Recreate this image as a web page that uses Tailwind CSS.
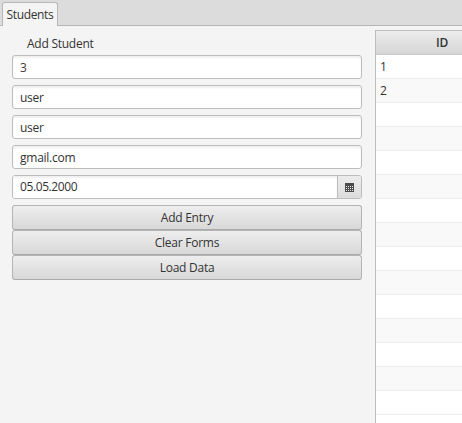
<!DOCTYPE html>
<html lang="en">
<head>
    <meta charset="UTF-8">
    <title>Students</title>
    <script src="https://cdn.jsdelivr.net/npm/@tailwindcss/browser@4"></script>
</head>
<body class="w-[462px] h-[423px] overflow-hidden bg-[#f4f4f4] text-[#333] text-[12px] tracking-[-0.25px] font-['Open_Sans','Noto_Sans',sans-serif]">
    <!-- tab bar -->
    <div class="h-[26px] bg-[#dcdcdc] border-b border-[#b5b5b5] pl-[2px] pt-[2px]">
        <div class="w-[56px] h-[24px] bg-[#f4f4f4] border border-b-0 border-[#b8b8b8] rounded-t-[3px] flex items-center justify-center text-[12px] tracking-[-0.35px]">Students</div>
    </div>

    <div class="flex h-[397px]">
        <!-- form -->
        <div class="w-[375px] shrink-0 pl-[12px] pr-[13px]">
            <div class="h-[29px] pl-[15px] pt-[9px] leading-[17px]">Add Student</div>
            <div class="flex flex-col gap-[6px]">
                <input value="3" class="w-full h-[24px] px-[7px] bg-white border border-[#bdbdbd] rounded-[3px] shadow-[inset_0_2px_2px_#f0f0f0] outline-none text-[#4a3a32]">
                <input value="user" class="w-full h-[24px] px-[7px] bg-white border border-[#bdbdbd] rounded-[3px] shadow-[inset_0_2px_2px_#f0f0f0] outline-none">
                <input value="user" class="w-full h-[24px] px-[7px] bg-white border border-[#bdbdbd] rounded-[3px] shadow-[inset_0_2px_2px_#f0f0f0] outline-none">
                <input value="gmail.com" class="w-full h-[24px] px-[7px] bg-white border border-[#bdbdbd] rounded-[3px] shadow-[inset_0_2px_2px_#f0f0f0] outline-none">
                <div class="flex h-[24px] border border-[#bdbdbd] rounded-[3px] overflow-hidden">
                    <input value="05.05.2000" class="flex-1 min-w-0 px-[7px] bg-white shadow-[inset_0_2px_2px_#f0f0f0] outline-none tracking-[-0.4px]">
                    <div class="w-[24px] border-l border-[#bdbdbd] bg-gradient-to-b from-[#ececec] to-[#dcdcdc] flex items-center justify-center">
                        <svg width="9" height="9" viewBox="0 0 9 9">
                            <rect width="9" height="9" fill="#4a4a4a"/>
                            <path d="M1 3h1v1H1zM3 3h1v1H3zM5 3h1v1H5zM7 3h1v1H7zM1 5h1v1H1zM3 5h1v1H3zM5 5h1v1H5zM7 5h1v1H7zM1 7h1v1H1zM3 7h1v1H3zM5 7h1v1H5zM7 7h1v1H7z" fill="#eee"/>
                        </svg>
                    </div>
                </div>
            </div>
            <div class="flex flex-col mt-[6px]">
                <button class="h-[25px] border border-[#b4b4b4] border-b-[#aaa] rounded-[3px] bg-gradient-to-b from-[#eeeeee] to-[#d8d8d8]">Add Entry</button>
                <button class="h-[25px] border border-[#b4b4b4] border-b-[#aaa] rounded-[3px] bg-gradient-to-b from-[#eeeeee] to-[#d8d8d8]">Clear Forms</button>
                <button class="h-[25px] border border-[#b4b4b4] border-b-[#aaa] rounded-[3px] bg-gradient-to-b from-[#eeeeee] to-[#d8d8d8]">Load Data</button>
            </div>
        </div>

        <!-- table -->
        <div class="flex-1 mt-[4px] border-l border-t border-[#bdbdbd] bg-white">
            <div class="h-[24px] bg-gradient-to-b from-[#ececec] to-[#d6d6d6] border-b border-[#c8c8c8] flex items-center pl-[60px] font-semibold">ID</div>
            <div class="h-[24px] bg-white border-b border-[#ededed] pl-[4px] flex items-center">1</div>
            <div class="h-[24px] bg-[#f9f9f9] border-b border-[#ededed] pl-[4px] flex items-center">2</div>
            <div class="h-[24px] bg-white border-b border-[#ededed]"></div>
            <div class="h-[24px] bg-[#f9f9f9] border-b border-[#ededed]"></div>
            <div class="h-[24px] bg-white border-b border-[#ededed]"></div>
            <div class="h-[24px] bg-[#f9f9f9] border-b border-[#ededed]"></div>
            <div class="h-[24px] bg-white border-b border-[#ededed]"></div>
            <div class="h-[24px] bg-[#f9f9f9] border-b border-[#ededed]"></div>
            <div class="h-[24px] bg-white border-b border-[#ededed]"></div>
            <div class="h-[24px] bg-[#f9f9f9] border-b border-[#ededed]"></div>
            <div class="h-[24px] bg-white border-b border-[#ededed]"></div>
            <div class="h-[24px] bg-[#f9f9f9] border-b border-[#ededed]"></div>
            <div class="h-[24px] bg-white border-b border-[#ededed]"></div>
            <div class="h-[24px] bg-[#f9f9f9] border-b border-[#ededed]"></div>
            <div class="h-[24px] bg-white border-b border-[#ededed]"></div>
        </div>
    </div>
</body>
</html>
